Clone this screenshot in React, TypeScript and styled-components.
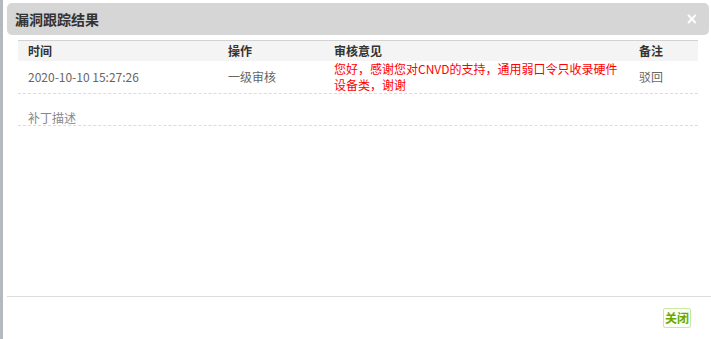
import * as React from 'react';
import styled, { createGlobalStyle } from 'styled-components';

const GlobalStyle = createGlobalStyle`
  *, *::before, *::after {
    box-sizing: border-box;
  }
  html, body {
    margin: 0;
    padding: 0;
    height: 100%;
    overflow: hidden;
    background: #b4b8bf;
  }
  body {
    font-family: "Noto Sans CJK SC", "Noto Sans", "Liberation Sans", sans-serif;
    font-size: 12px;
  }
  #root {
    height: 100%;
  }
`;

const COLUMNS = '200px 106px 305px 1fr';

const Page = styled.div`
  height: 339px;
  padding-left: 3px;
  display: flex;
`;

const Dialog = styled.div`
  flex: 1;
  background: #fff;
  padding: 3px 2px 0 4px;
  display: flex;
  flex-direction: column;
`;

const Header = styled.div`
  height: 32px;
  flex: none;
  background: #d6d6d6;
  border-radius: 5px;
  display: flex;
  align-items: center;
  justify-content: space-between;
  padding: 0 11px 0 8px;
`;

const Title = styled.h3`
  margin: 0;
  font-size: 14px;
  font-weight: bold;
  color: #333;
`;

const CloseX = styled.span`
  color: #fff;
  font-size: 15px;
  font-weight: bold;
  line-height: 1;
  font-family: "DejaVu Sans", sans-serif;
`;

const Body = styled.div`
  flex: 1;
  padding: 5px 11px 0 11px;
`;

const Row = styled.div<{ $head?: boolean }>`
  display: grid;
  grid-template-columns: ${COLUMNS};
  align-items: center;
  background: ${p => (p.$head ? '#f4f4f4' : 'transparent')};
  border-top: ${p => (p.$head ? '1px solid #d2d2d2' : 'none')};
  border-bottom: ${p => (p.$head ? 'none' : '1px dashed #dcdcdc')};
  min-height: ${p => (p.$head ? '21px' : '33px')};
  font-weight: ${p => (p.$head ? 'bold' : 'normal')};
  color: ${p => (p.$head ? '#333' : '#666')};
`;

const Cell = styled.div<{ $red?: boolean }>`
  padding-left: 10px;
  line-height: 16px;
  color: ${p => (p.$red ? '#f00' : 'inherit')};
`;

const DescRow = styled.div`
  padding: 16px 0 0 10px;
  height: 32px;
  line-height: 16px;
  color: #888;
  border-bottom: 1px dashed #dcdcdc;
`;

const Footer = styled.div`
  height: 43px;
  flex: none;
  border-top: 1px solid #dcdcdc;
  display: flex;
  justify-content: flex-end;
  align-items: flex-start;
  padding: 11px 20px 0 0;
  margin-right: -2px;
`;

const CloseButton = styled.button`
  height: 20px;
  padding: 0 1px;
  border: 1px solid #c9e8a2;
  border-radius: 2px;
  background: #fbfff5;
  color: #6aa800;
  font-family: inherit;
  font-size: 12px;
  font-weight: bold;
  line-height: 18px;
  cursor: pointer;
`;

export default function App() {
  return (
    <>
      <GlobalStyle />
      <Page>
        <Dialog>
          <Header>
            <Title>漏洞跟踪结果</Title>
            <CloseX>×</CloseX>
          </Header>
          <Body>
            <Row $head>
              <Cell>时间</Cell>
              <Cell>操作</Cell>
              <Cell>审核意见</Cell>
              <Cell>备注</Cell>
            </Row>
            <Row>
              <Cell>2020-10-10 15:27:26</Cell>
              <Cell>一级审核</Cell>
              <Cell $red>您好，感谢您对CNVD的支持，通用弱口令只收录硬件设备类，谢谢</Cell>
              <Cell>驳回</Cell>
            </Row>
            <DescRow>补丁描述</DescRow>
          </Body>
          <Footer>
            <CloseButton>关闭</CloseButton>
          </Footer>
        </Dialog>
      </Page>
    </>
  );
}
